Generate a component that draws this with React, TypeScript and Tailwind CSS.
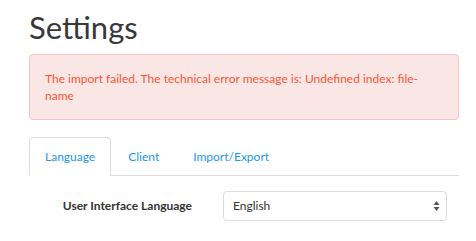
import React from "react";

export default function App() {
  return (
    <div className="w-[476px] h-[241px] bg-white overflow-hidden" style={{ fontFamily: "Lato, 'Open Sans', sans-serif" }}>
      <div className="pl-[29px] pr-[17px] pt-[10px]">
        <h1 className="text-[31px] leading-[35px] font-normal text-[#383838]">Settings</h1>
        <div className="mt-[9px] rounded-[4px] border border-[#f5c6c6] bg-[#fbe6e6] px-[15px] py-[15px] text-[12px] leading-[17px] text-[#fa5533]">
          The import failed. The technical error message is: Undefined index: file-name
        </div>
        <div className="mt-[17px] flex border-b border-[#dddddd]">
          <div className="-mb-px h-[39px] rounded-t-[4px] border border-[#dddddd] border-b-white bg-white px-[15px] pt-[10px] text-[12px] leading-[17px] text-[#2196f3]">
            Language
          </div>
          <div className="h-[38px] px-[17px] pt-[11px] text-[12px] leading-[17px] text-[#2196f3]">Client</div>
          <div className="h-[38px] px-[17px] pt-[11px] text-[12px] leading-[17px] text-[#2196f3]">Import/Export</div>
        </div>
        <div className="mt-[15px] flex items-center">
          <div className="w-[194px] pr-[31px] text-right text-[12px] font-bold text-[#333333]">User Interface Language</div>
          <div className="relative flex h-[30px] w-[224px] items-center rounded-[4px] border border-[#dddddd] bg-white pl-[9px] text-[12px] text-[#333333]">
            English
            <svg className="absolute right-[6px] top-[8px]" width="7" height="12" viewBox="0 0 7 12">
              <path d="M3.5 1 L6.5 5 L0.5 5 Z" fill="#555" />
              <path d="M3.5 11 L6.5 7 L0.5 7 Z" fill="#555" />
            </svg>
          </div>
        </div>
      </div>
    </div>
  );
}
